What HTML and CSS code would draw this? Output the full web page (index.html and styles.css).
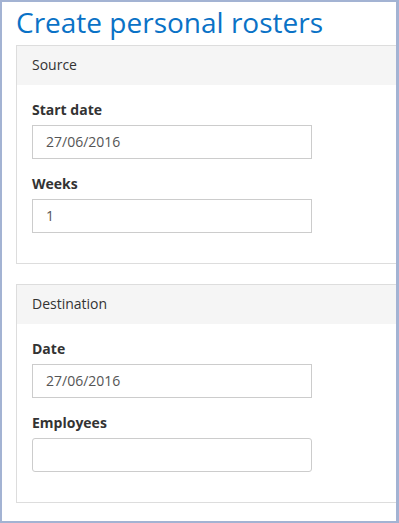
FILE: index.html
```html
<!DOCTYPE html>
<html>
<head>
<meta charset="utf-8">
<link rel="stylesheet" href="styles.css">
</head>
<body>
<div class="frame">
  <h1 class="title">Create personal rosters</h1>
  <div class="panel">
    <div class="panel-heading">Source</div>
    <div class="panel-body">
      <div class="form-group">
        <label class="label">Start date</label>
        <div class="input">27/06/2016</div>
      </div>
      <div class="form-group">
        <label class="label">Weeks</label>
        <div class="input">1</div>
      </div>
    </div>
  </div>
  <div class="panel">
    <div class="panel-heading">Destination</div>
    <div class="panel-body">
      <div class="form-group">
        <label class="label">Date</label>
        <div class="input">27/06/2016</div>
      </div>
      <div class="form-group">
        <label class="label">Employees</label>
        <div class="input input-rounded"></div>
      </div>
    </div>
  </div>
</div>
</body>
</html>
```
FILE: styles.css
```css
html, body {
  margin: 0;
  padding: 0;
  background: #ffffff;
}
body {
  font-family: "Open Sans", "Liberation Sans", sans-serif;
  font-size: 14px;
  color: #333333;
}
.frame {
  width: 399px;
  height: 523px;
  box-sizing: border-box;
  border: 2px solid #a3b3d3;
  border-right-width: 3px;
  overflow: hidden;
  padding-top: 4px;
  background: #ffffff;
}
.title {
  margin: 0 0 6px 14px;
  font-size: 28px;
  line-height: 33px;
  font-weight: 400;
  color: #0a72c6;
  white-space: nowrap;
}
.panel {
  margin: 0 0 20px 14px;
  width: 420px;
  border: 1px solid #dddddd;
  background: #ffffff;
}
.panel-heading {
  background: #f5f5f5;
  padding: 9px 15px 10px;
  line-height: 20px;
  color: #333333;
}
.panel-body {
  padding: 15px;
}
.form-group {
  display: flex;
  flex-direction: column;
  margin-bottom: 15px;
}
.label {
  display: block;
  font-weight: 700;
  line-height: 20px;
  margin-bottom: 5px;
  color: #333333;
}
.input {
  width: 280px;
  height: 34px;
  box-sizing: border-box;
  border: 1px solid #cccccc;
  padding: 6px 13px;
  line-height: 20px;
  color: #555555;
  background: #ffffff;
}
.input-rounded {
  border-radius: 3px;
}
```
